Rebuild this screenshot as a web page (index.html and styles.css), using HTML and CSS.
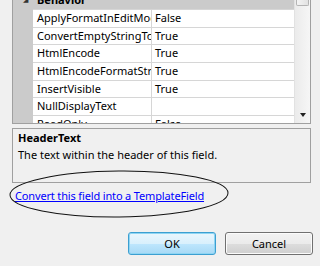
FILE: index.html
```html
<!DOCTYPE html>
<html>
<head>
<meta charset="utf-8">
<link rel="stylesheet" href="styles.css">
</head>
<body>
<div class="dialog">
  <div class="grid">
    <div class="grid-body">
      <div class="category"><span class="cat-icon">&#9698;</span><span class="cat-name">Behavior</span></div>
      <div class="row"><div class="name">ApplyFormatInEditMode</div><div class="value">False</div></div>
      <div class="row"><div class="name">ConvertEmptyStringToNull</div><div class="value">True</div></div>
      <div class="row"><div class="name">HtmlEncode</div><div class="value">True</div></div>
      <div class="row"><div class="name">HtmlEncodeFormatString</div><div class="value">True</div></div>
      <div class="row"><div class="name">InsertVisible</div><div class="value">True</div></div>
      <div class="row"><div class="name">NullDisplayText</div><div class="value"></div></div>
      <div class="row"><div class="name">ReadOnly</div><div class="value">False</div></div>
    </div>
    <div class="scrollbar">
      <div class="thumb"></div>
      <div class="track"></div>
      <div class="arrow-btn"><span class="arrow-down"></span></div>
    </div>
  </div>
  <div class="desc">
    <div class="desc-title">HeaderText</div>
    <div class="desc-text">The text within the header of this field.</div>
  </div>
  <div class="link-row"><a class="link" href="#">Convert this field into a TemplateField</a></div>
  <div class="buttons">
    <button class="btn btn-ok">OK</button>
    <button class="btn">Cancel</button>
  </div>
</div>
<svg class="annotation" width="320" height="266" viewBox="0 0 320 266">
  <ellipse cx="119" cy="194" rx="109" ry="23" fill="none" stroke="#111" stroke-width="1" transform="rotate(-0.5 119 194)"/>
</svg>
</body>
</html>
```

FILE: styles.css
```css
html, body {
  margin: 0;
  padding: 0;
}
body {
  position: relative;
  width: 320px;
  height: 266px;
  overflow: hidden;
  background: #f0f0f0;
  font-family: "Noto Sans", "Open Sans", sans-serif;
  font-size: 11px;
  color: #000;
}
.dialog {
  padding: 0 9px 0 12px;
}
.grid {
  display: flex;
  margin-top: -10px;
  height: 134px;
  box-sizing: border-box;
  border: 1px solid #a0a0a0;
  background: #cbcbcb;
}
.grid-body {
  flex: 1;
  overflow: hidden;
  background: #cbcbcb;
}
.category {
  display: flex;
  align-items: center;
  height: 18px;
  line-height: 18px;
  white-space: nowrap;
}
.cat-icon {
  width: 20px;
  text-align: center;
  font-size: 7px;
  color: #333;
  padding-left: 4px;
  box-sizing: border-box;
}
.cat-name {
  font-weight: bold;
  padding-left: 4px;
}
.row {
  display: flex;
  margin-left: 20px;
  height: 17.67px;
  box-sizing: border-box;
  border-top: 1px solid #d6d6d6;
  background: #fff;
  line-height: 16px;
  white-space: nowrap;
}
.name {
  width: 119px;
  flex: none;
  box-sizing: border-box;
  padding-left: 4px;
  border-right: 1px solid #d6d6d6;
  overflow: hidden;
}
.value {
  flex: 1;
  padding-left: 3px;
  overflow: hidden;
}
.scrollbar {
  width: 16px;
  flex: none;
  display: flex;
  flex-direction: column;
  box-sizing: border-box;
  border-left: 1px solid #e2e2e2;
  background: linear-gradient(to right, #ebebeb, #f6f6f6);
}
.thumb {
  height: 15px;
  margin: 0 1px 0 1px;
  box-sizing: border-box;
  border: 1px solid #b4b4b4;
  border-top: none;
  border-radius: 0 0 2px 2px;
  background: linear-gradient(to right, #f4f4f4, #e2e2e2);
}
.track {
  flex: 1;
}
.arrow-btn {
  height: 16px;
  display: flex;
  align-items: center;
  justify-content: center;
}
.arrow-down {
  width: 0;
  height: 0;
  border-left: 3.5px solid transparent;
  border-right: 3.5px solid transparent;
  border-top: 4px solid #222;
}
.desc {
  margin-top: 4px;
  height: 55px;
  box-sizing: border-box;
  border: 1px solid #a0a0a0;
  padding: 0 5px;
  line-height: 17px;
}
.desc-title {
  font-weight: bold;
}
.link-row {
  padding: 4px 0 0 3px;
  line-height: 17px;
}
.link {
  color: #0000ff;
  text-decoration: underline;
  letter-spacing: -0.15px;
}
.buttons {
  display: flex;
  justify-content: flex-end;
  gap: 9px;
  margin-top: 28px;
  margin-right: -2px;
}
.btn {
  width: 88px;
  height: 23px;
  box-sizing: border-box;
  border: 1px solid #707070;
  border-radius: 3px;
  font-family: inherit;
  font-size: 11px;
  color: #000;
  padding: 0;
  background: linear-gradient(to bottom, #f2f2f2 0%, #ebebeb 50%, #dddddd 51%, #cfcfcf 100%);
  box-shadow: inset 0 0 0 1px #fbfbfb;
}
.btn-ok {
  border-color: #3c9fd1;
  background: linear-gradient(to bottom, #eaf6fd 0%, #d9f0fc 50%, #bee6fd 51%, #a7d9f5 100%);
  box-shadow: inset 0 0 0 1px #8fd5f3;
}
.annotation {
  position: absolute;
  left: 0;
  top: 0;
  pointer-events: none;
}
```
